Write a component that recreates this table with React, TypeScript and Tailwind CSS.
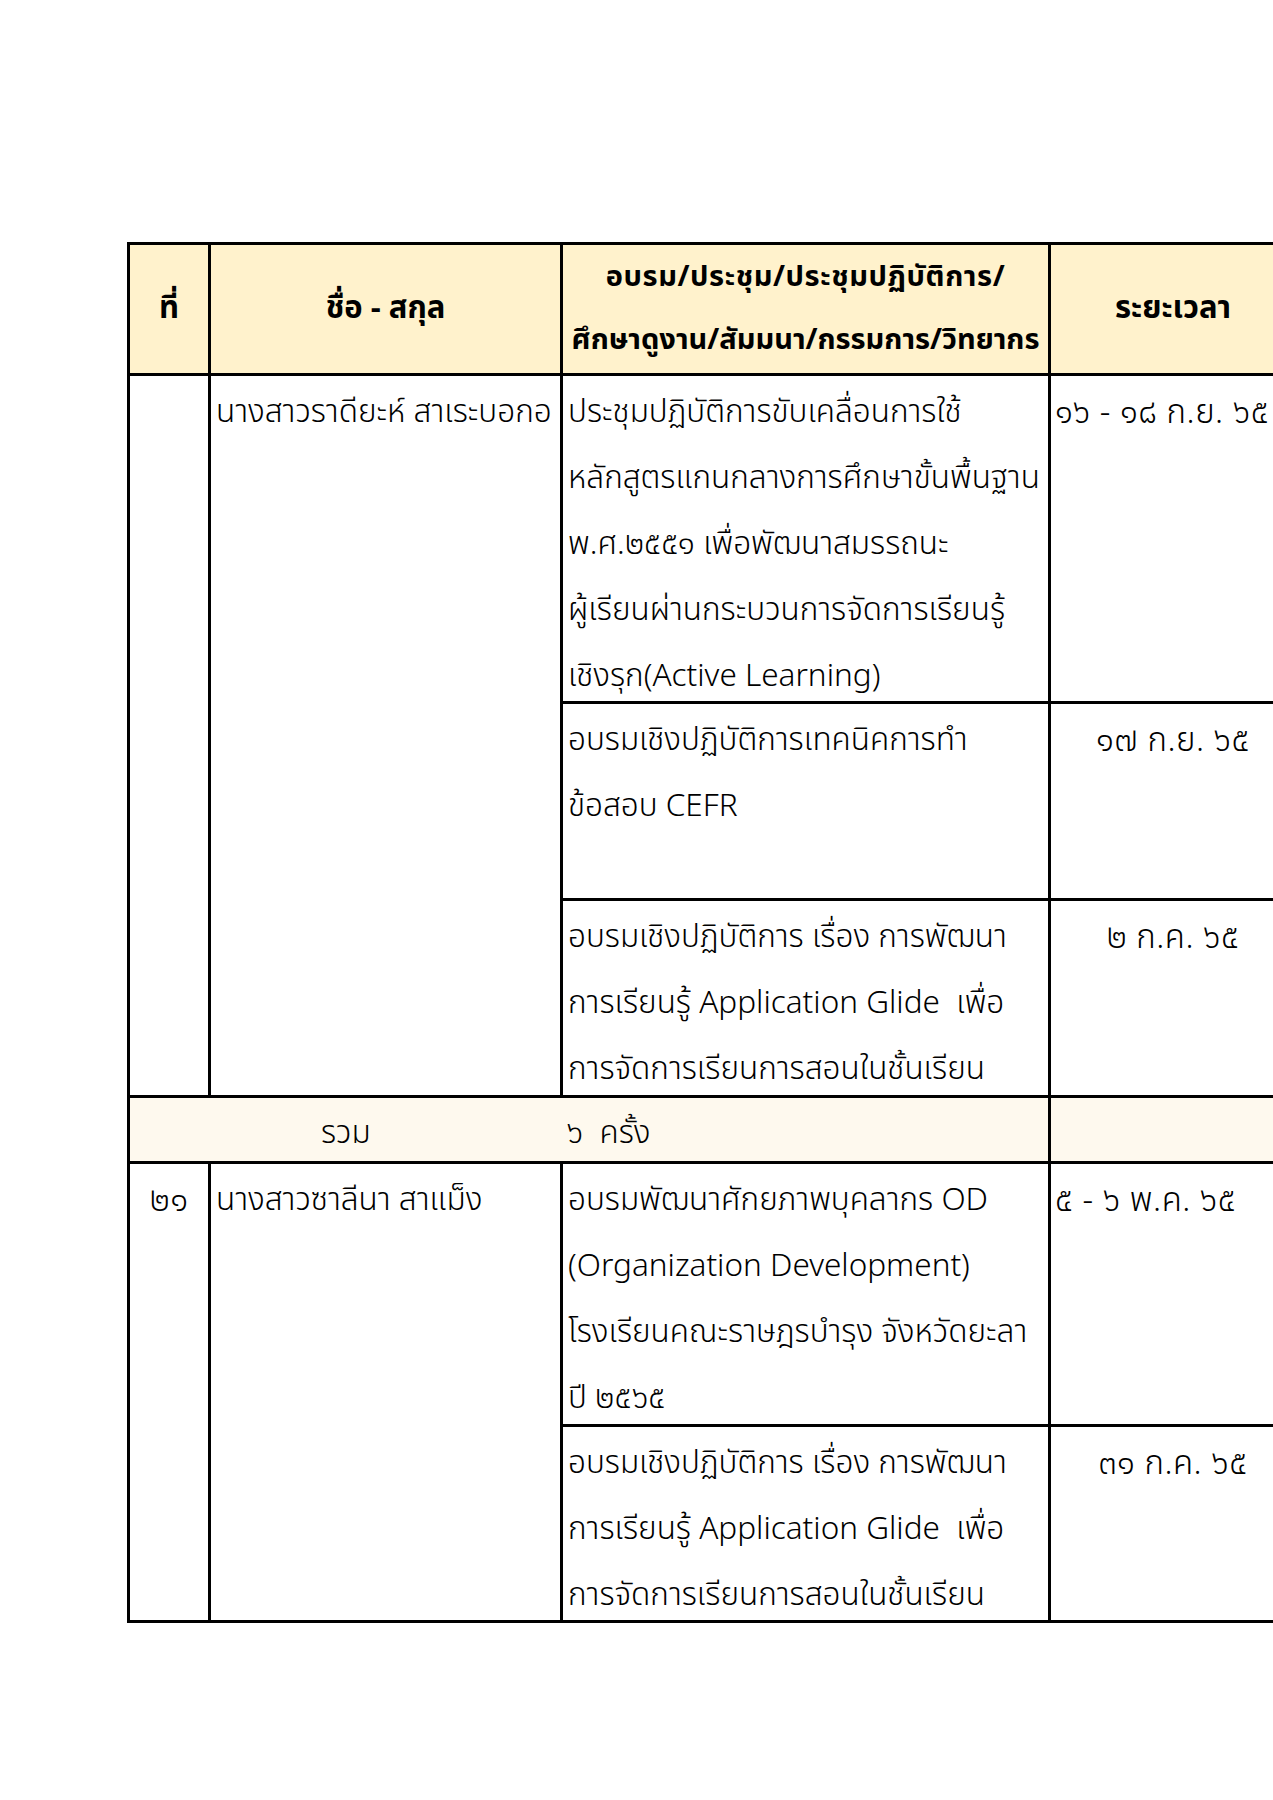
import React from 'react'

type Item = { text: string[]; date: string; left?: boolean; h: number }
type Row = { no: string; name: string; items: Item[] }

const glide = ['อบรมเชิงปฏิบัติการ เรื่อง การพัฒนา', 'การเรียนรู้ Application Glide  เพื่อ', 'การจัดการเรียนการสอนในชั้นเรียน']

const first: Row = {
  no: '',
  name: 'นางสาวราดียะห์ สาเระบอกอ',
  items: [
    {
      text: [
        'ประชุมปฏิบัติการขับเคลื่อนการใช้',
        'หลักสูตรแกนกลางการศึกษาขั้นพื้นฐาน',
        'พ.ศ.๒๕๕๑ เพื่อพัฒนาสมรรถนะ',
        'ผู้เรียนผ่านกระบวนการจัดการเรียนรู้',
        'เชิงรุก(Active Learning)',
      ],
      date: '๑๖ - ๑๘ ก.ย. ๖๕',
      left: true,
      h: 328,
    },
    { text: ['อบรมเชิงปฏิบัติการเทคนิคการทำ', 'ข้อสอบ CEFR'], date: '๑๗ ก.ย. ๖๕', h: 197 },
    { text: glide, date: '๒ ก.ค. ๖๕', h: 197 },
  ],
}

const second: Row = {
  no: '๒๑',
  name: 'นางสาวซาลีนา สาแม็ง',
  items: [
    {
      text: ['อบรมพัฒนาศักยภาพบุคลากร OD', '(Organization Development)', 'โรงเรียนคณะราษฎรบำรุง จังหวัดยะลา', 'ปี ๒๕๖๕'],
      date: '๕ - ๖ พ.ค. ๖๕',
      left: true,
      h: 263,
    },
    { text: glide, date: '๓๑ ก.ค. ๖๕', h: 196 },
  ],
}

const cell = 'border-[3px] border-solid border-black align-top p-0'
// lines sit a bit lower than the top border, like the source sheet
const inner = 'pt-[4px] -mb-[10px]'

function PersonRows({ row }: { row: Row }) {
  return (
    <>
      {row.items.map((it, i) => (
        <tr key={i} style={{ height: it.h }}>
          {i === 0 && (
            <>
              <td rowSpan={row.items.length} className={`${cell} text-center text-[33px] tracking-[0.5px]`}>
                <div className={inner}>{row.no}</div>
              </td>
              <td rowSpan={row.items.length} className={`${cell} pl-[5px] whitespace-nowrap`}>
                <div className={inner}>{row.name}</div>
              </td>
            </>
          )}
          <td className={`${cell} pl-[5px] whitespace-nowrap`}>
            <div className={inner}>
              {it.text.map((t, j) => (
                <div key={j} className="whitespace-pre">{t}</div>
              ))}
            </div>
          </td>
          <td className={`${cell} whitespace-nowrap text-[33px] tracking-[0.5px] ${it.left ? 'pl-[4px] text-left' : 'text-center'}`}>
            <div className={inner}>{it.date}</div>
          </td>
        </tr>
      ))}
    </>
  )
}

export default function App() {
  return (
    <div className="w-full min-h-[1800px] overflow-hidden bg-white font-['Noto_Sans_Thai','Leelawadee_UI',Tahoma,'Noto_Sans',sans-serif] text-[31.5px] font-light leading-[66px] text-black">
      <div className="pt-[242px] pl-[127px]">
        <table className="border-collapse table-fixed w-[1168px]">
          <colgroup>
            <col className="w-[81px]" />
            <col className="w-[352px]" />
            <col className="w-[488px]" />
            <col className="w-[247px]" />
          </colgroup>
          <thead>
            <tr className="h-[131px] bg-[#fff2cc] font-bold text-[29px]">
              <th className={`${cell} !align-middle text-center text-[31px]`}>ที่</th>
              <th className={`${cell} !align-middle text-center text-[31px]`}>ชื่อ - สกุล</th>
              <th className={`${cell} !align-middle text-center leading-[63px] whitespace-nowrap`}>
                <div className="tracking-[0.6px]">อบรม/ประชุม/ประชุมปฏิบัติการ/</div>
                <div>ศึกษาดูงาน/สัมมนา/กรรมการ/วิทยากร</div>
              </th>
              <th className={`${cell} !align-middle text-center text-[31px]`}>ระยะเวลา</th>
            </tr>
          </thead>
          <tbody>
            <PersonRows row={first} />
            <tr className="h-[66px] bg-[#fef9ee] leading-[52px]">
              <td colSpan={2} className="border-[3px] border-r-0 border-solid border-black px-0 pt-[10px] pb-0 text-center align-top">
                รวม
              </td>
              <td className="border-[3px] border-l-0 border-solid border-black pl-[5px] pt-[10px] align-top whitespace-pre">
                ๖  ครั้ง
              </td>
              <td className={cell}></td>
            </tr>
            <PersonRows row={second} />
          </tbody>
        </table>
      </div>
    </div>
  )
}
